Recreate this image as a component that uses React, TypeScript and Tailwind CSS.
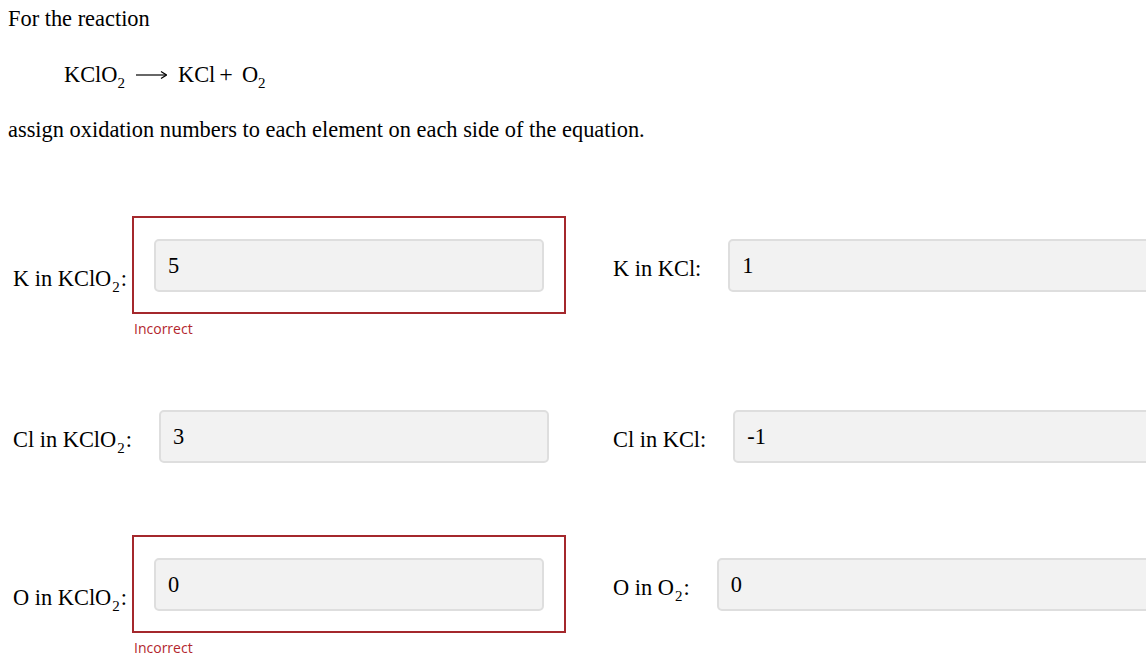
import React from 'react';

interface FieldProps {
  label: React.ReactNode;
  value: string;
  incorrect?: boolean;
  inputWidth: string;
}

const Sub: React.FC<{ children: React.ReactNode }> = ({ children }) => (
  <sub className="text-[15px] bottom-[-6px]">{children}</sub>
);

// subscript inside a field label, a touch wider than in the equation
const LabelSub: React.FC<{ children: React.ReactNode }> = ({ children }) => (
  <sub className="pl-[1px] pr-[1px] text-[15px] bottom-[-6px]">{children}</sub>
);

const Field: React.FC<FieldProps> = ({ label, value, incorrect, inputWidth }) => {
  return (
    <div className="flex items-center">
      <span className={`shrink-0 whitespace-nowrap ${incorrect ? 'pt-[4px]' : 'pt-[8px]'}`}>{label}</span>
      <div className="ml-[5px] flex shrink-0 flex-col items-start">
        <div
          className={`border-2 px-[20px] pt-[21px] pb-[20px] ${
            incorrect ? 'border-[#a4282c]' : 'border-transparent'
          }`}
        >
          <input
            readOnly
            value={value}
            className={`${inputWidth} h-[53px] rounded-[5px] border-2 border-[#dedede] bg-[#f2f2f2] px-[12px] text-[22.4px] text-black outline-none`}
          />
        </div>
        {incorrect && (
          <p className="mt-[6px] ml-[2px] text-[14px] leading-[17px] font-['Open_Sans',sans-serif] text-[#b3262e]">
            Incorrect
          </p>
        )}
      </div>
    </div>
  );
};

const App: React.FC = () => {
  const rows = [
    {
      left: { label: <>K in KClO<LabelSub>2</LabelSub>:</>, value: '5', incorrect: true },
      right: { label: <>K in KCl:</>, value: '1' },
    },
    {
      left: { label: <>Cl in KClO<LabelSub>2</LabelSub>:</>, value: '3', incorrect: false },
      right: { label: <>Cl in KCl:</>, value: '-1' },
    },
    {
      left: { label: <>O in KClO<LabelSub>2</LabelSub>:</>, value: '0', incorrect: true },
      right: { label: <>O in O<LabelSub>2</LabelSub>:</>, value: '0' },
    },
  ];

  return (
    <div className="h-screen w-full overflow-hidden bg-white pt-[6px] pl-[8px] text-[22.4px] text-black font-['Liberation_Serif',serif]">
      <p className="leading-[25px]">For the reaction</p>

      {/* Equation */}
      <div className="mt-[31px] ml-[56px] flex items-baseline leading-[25px]">
        <span>
          KClO<Sub>2</Sub>
        </span>
        <span className="mx-[11px] self-center">
          <svg width="31" height="10" viewBox="0 0 31 10" className="mt-[1px]">
            <line x1="0" y1="5" x2="30" y2="5" stroke="#000" strokeWidth="1.2" />
            <path d="M25 1.5 L30.5 5 L25 8.5" fill="none" stroke="#000" strokeWidth="1.2" />
          </svg>
        </span>
        <span>KCl</span>
        <span className="ml-[4px] mr-[9px] text-[24px]">+</span>
        <span>
          O<Sub>2</Sub>
        </span>
      </div>

      <p className="mt-[30px] leading-[25px]">
        assign oxidation numbers to each element on each side of the equation.
      </p>

      {/* Answer fields */}
      <div className="mt-[74px] ml-[5px] flex flex-col gap-[50px]">
        {rows.map((row, i) => (
          <div key={i} className="flex items-start">
            <div className="w-[600px] shrink-0">
              <Field
                label={row.left.label}
                value={row.left.value}
                incorrect={row.left.incorrect}
                inputWidth="w-[390px]"
              />
            </div>
            <div className="shrink-0">
              <Field label={row.right.label} value={row.right.value} inputWidth="w-[440px]" />
            </div>
          </div>
        ))}
      </div>
    </div>
  );
};

export default App;
